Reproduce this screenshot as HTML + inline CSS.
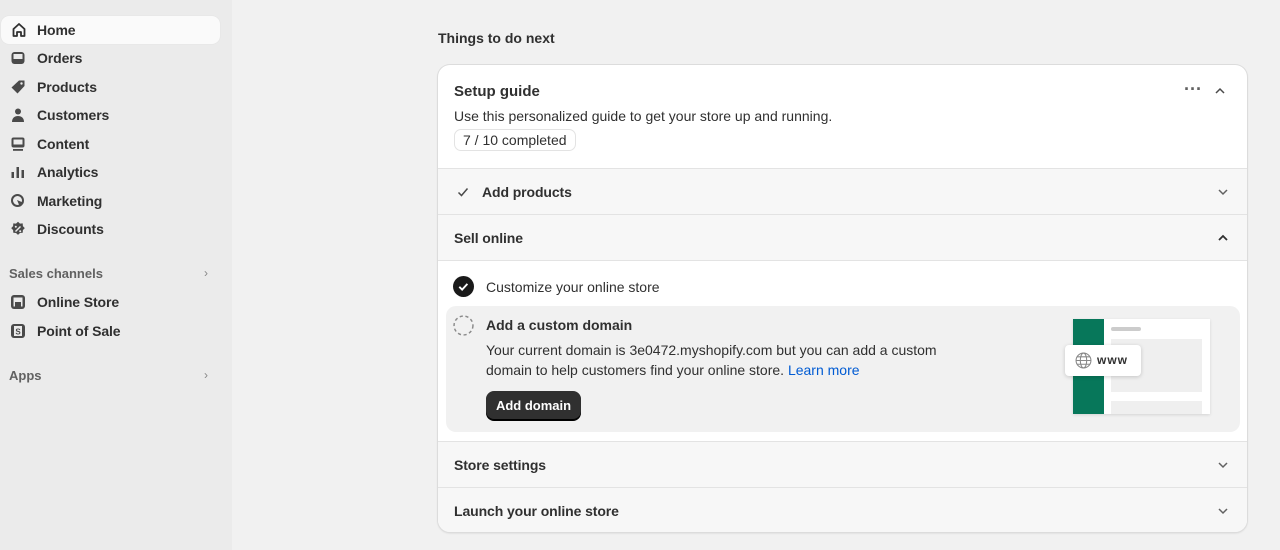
<!DOCTYPE html>
<html><head><style>
*{box-sizing:border-box;margin:0;padding:0}
body{width:1280px;height:550px;overflow:hidden;background:#f1f1f1;font-family:"Liberation Sans",sans-serif;color:#303030;position:relative;font-size:14px}
.side{position:absolute;left:0;top:0;width:232px;height:550px;background:#ebebeb}
.nav{position:absolute;left:0;width:220px;height:28px;display:flex;align-items:center;font-size:14px;font-weight:600;color:#303030}
.nav .ic{position:absolute;left:10px;top:6px;width:16px;height:16px}
.nav span{position:absolute;left:37px;letter-spacing:-0.1px}
.sec{position:absolute;left:9px;font-size:13px;font-weight:600;color:#616161}
.chev{position:absolute;left:204px;font-size:12px;color:#888}
.abs{position:absolute}
.card{position:absolute;left:438px;top:65px;width:809px;height:467px;background:#fff;border-radius:12px;box-shadow:0 0 0 1px #dcdcdc,0 1px 2px rgba(0,0,0,.15);overflow:hidden}
.row{position:absolute;left:0;width:809px;height:46px;background:#f7f7f7;border-top:1px solid #e3e3e3;font-weight:600;font-size:14px;letter-spacing:-0.1px}
.row b{position:absolute;left:16px;top:15px;font-weight:600}
.dn{position:absolute;right:18px;top:17px;width:12px;height:12px}
</style></head><body>
<div class="side">
 <div class="nav" style="top:16px;background:#fafafa;border-radius:8px;left:1px;width:219px;box-shadow:0 0 1px rgba(0,0,0,.1)"><svg class="ic" viewBox="0 0 16 16"><path d="M2.5 14V7L8 2l5.5 5v7H10V10H6v4z" fill="none" stroke="#303030" stroke-width="1.8" stroke-linejoin="round"/></svg><span style="left:36px">Home</span></div>
 <div class="nav" style="top:44px"><svg class="ic" viewBox="0 0 16 16"><rect x="1.5" y="2" width="13" height="12" rx="3" fill="#4a4a4a"/><rect x="3.5" y="4" width="9" height="5" fill="#ebebeb"/></svg><span>Orders</span></div>
 <div class="nav" style="top:73px"><svg class="ic" viewBox="0 0 16 16"><path d="M9 1.5h5.5V7l-7 7.5L1.5 8.5z" fill="#4a4a4a"/><circle cx="11.5" cy="4.5" r="1.2" fill="#ebebeb"/></svg><span>Products</span></div>
 <div class="nav" style="top:101px"><svg class="ic" viewBox="0 0 16 16"><circle cx="8" cy="4.5" r="3" fill="#4a4a4a"/><path d="M2 15c0-4 2.5-6 6-6s6 2 6 6z" fill="#4a4a4a"/></svg><span>Customers</span></div>
 <div class="nav" style="top:130px"><svg class="ic" viewBox="0 0 16 16"><rect x="1.5" y="1.5" width="13" height="10" rx="2" fill="#4a4a4a"/><rect x="3.5" y="3.5" width="9" height="5" fill="#ebebeb"/><rect x="3" y="13" width="10" height="1.8" fill="#4a4a4a"/></svg><span>Content</span></div>
 <div class="nav" style="top:158px"><svg class="ic" viewBox="0 0 16 16"><rect x="1.5" y="8" width="2.5" height="6" fill="#4a4a4a"/><rect x="6.5" y="3" width="2.5" height="11" fill="#4a4a4a"/><rect x="11.5" y="6" width="2.5" height="8" fill="#4a4a4a"/></svg><span>Analytics</span></div>
 <div class="nav" style="top:187px"><svg class="ic" viewBox="0 0 16 16"><circle cx="7.5" cy="7.5" r="5.5" fill="none" stroke="#4a4a4a" stroke-width="2"/><path d="M7 7l7 3-3 1-1 3z" fill="#4a4a4a"/></svg><span>Marketing</span></div>
 <div class="nav" style="top:215px"><svg class="ic" viewBox="0 0 16 16"><path d="M8 .8l2 1.8 2.7-.2.2 2.7 1.9 2-1.9 2-.2 2.7-2.7.2-2 1.9-2-1.9-2.7-.2-.2-2.7L1.2 7.1l1.9-2 .2-2.7 2.7.2z" fill="#4a4a4a"/><path d="M5.5 10.5l5-5" stroke="#ebebeb" stroke-width="1.4"/><circle cx="5.8" cy="5.8" r="1" fill="#ebebeb"/><circle cx="10.2" cy="10.2" r="1" fill="#ebebeb"/></svg><span>Discounts</span></div>
 <div class="sec" style="top:266px">Sales channels</div><div class="chev" style="top:266px">›</div>
 <div class="nav" style="top:288px"><svg class="ic" viewBox="0 0 16 16"><rect x="1" y="1" width="14" height="14" rx="3" fill="#4a4a4a"/><rect x="3.5" y="3.5" width="9" height="9" fill="#ebebeb"/><rect x="5" y="8" width="6" height="4.5" fill="#4a4a4a"/></svg><span>Online Store</span></div>
 <div class="nav" style="top:317px"><svg class="ic" viewBox="0 0 16 16"><rect x="1" y="1" width="14" height="14" rx="3" fill="#4a4a4a"/><rect x="4" y="3" width="8" height="10" fill="#ebebeb"/><text x="8" y="11.5" font-size="8" text-anchor="middle" fill="#4a4a4a" font-family="Liberation Sans" font-weight="bold">S</text></svg><span>Point of Sale</span></div>
 <div class="sec" style="top:368px">Apps</div><div class="chev" style="top:368px">›</div>
</div>

<div class="abs" style="left:438px;top:30px;font-weight:600;font-size:14px">Things to do next</div>
<div class="card">
 <div class="abs" style="left:16px;top:18px;font-weight:600;font-size:15px">Setup guide</div>
 <div class="abs" style="left:16px;top:43px;font-size:14px">Use this personalized guide to get your store up and running.</div>
 <div class="abs" style="left:16px;top:64px;height:22px;padding:0 8px;border:1px solid #e3e3e3;border-radius:7px;line-height:20px;font-size:14px">7 / 10 completed</div>
 <div class="abs" style="left:746px;top:14px;font-size:18px;color:#616161;letter-spacing:0px;font-weight:bold">···</div>
 <svg class="abs" style="left:776px;top:20px" width="12" height="12" viewBox="0 0 12 12"><path d="M2 8l4-4 4 4" fill="none" stroke="#4a4a4a" stroke-width="1.5"/></svg>
 <div class="row" style="top:103px"><svg class="abs" style="left:19px;top:17px" width="12" height="12" viewBox="0 0 12 12"><path d="M1.5 6.5l3 3 6-7" fill="none" stroke="#4a4a4a" stroke-width="1.5"/></svg><b style="left:44px">Add products</b><svg class="dn" viewBox="0 0 12 12"><path d="M2 4l4 4 4-4" fill="none" stroke="#616161" stroke-width="1.5"/></svg></div>
 <div class="row" style="top:149px"><b>Sell online</b><svg class="dn" viewBox="0 0 12 12"><path d="M2 8l4-4 4 4" fill="none" stroke="#303030" stroke-width="1.8"/></svg></div>
 <div class="abs" style="left:0;top:195px;width:809px;height:1px;background:#e3e3e3"></div>
 <svg class="abs" style="left:15px;top:211px" width="21" height="21" viewBox="0 0 20 20"><circle cx="10" cy="10" r="10" fill="#1a1a1a"/><path d="M6 10.3l2.7 2.7 5-5.5" fill="none" stroke="#fff" stroke-width="1.8"/></svg>
 <div class="abs" style="left:48px;top:214px;font-size:14px">Customize your online store</div>
 <div class="abs" style="left:8px;top:241px;width:794px;height:126px;background:#f1f1f1;border-radius:10px">
  <svg class="abs" style="left:7px;top:9px" width="21" height="21" viewBox="0 0 20 20"><circle cx="10" cy="10" r="9" fill="none" stroke="#8a8a8a" stroke-width="1.4" stroke-dasharray="3 2.5"/></svg>
  <div class="abs" style="left:40px;top:11px;font-weight:600;font-size:14px">Add a custom domain</div>
  <div class="abs" style="left:40px;top:34px;width:480px;font-size:14px;line-height:20px">Your current domain is 3e0472.myshopify.com but you can add a custom domain to help customers find your online store. <span style="color:#005bd3">Learn more</span></div>
  <div class="abs" style="left:40px;top:85px;width:95px;height:29px;background:#303030;color:#fff;border-radius:8px;font-weight:600;font-size:13px;text-align:center;line-height:29px;box-shadow:inset 0 -1px 0 #000,0 1px 0 #000">Add domain</div>
  <div class="abs" style="left:627px;top:13px;width:137px;height:95px;background:#fff;box-shadow:0 1px 3px rgba(0,0,0,.12)"></div>
  <div class="abs" style="left:627px;top:13px;width:31px;height:95px;background:#07775a"></div>
  <div class="abs" style="left:665px;top:21px;width:30px;height:4px;border-radius:2px;background:#ccc"></div>
  <div class="abs" style="left:665px;top:33px;width:91px;height:53px;background:#efefef"></div>
  <div class="abs" style="left:665px;top:95px;width:91px;height:13px;background:#efefef"></div>
  <div class="abs" style="left:619px;top:39px;width:76px;height:31px;background:#fff;border-radius:4px;box-shadow:0 1px 4px rgba(0,0,0,.18)"></div>
  <svg class="abs" style="left:629px;top:46px" width="17" height="17" viewBox="0 0 16 16"><g fill="none" stroke="#888" stroke-width="1"><circle cx="8" cy="8" r="7"/><ellipse cx="8" cy="8" rx="3" ry="7"/><path d="M1 8h14M2 4.5h12M2 11.5h12"/></g></svg>
  <div class="abs" style="left:651px;top:47px;font-weight:700;font-size:12px;letter-spacing:1px;color:#303030">www</div>
 </div>
 <div class="row" style="top:376px"><b>Store settings</b><svg class="dn" viewBox="0 0 12 12"><path d="M2 4l4 4 4-4" fill="none" stroke="#616161" stroke-width="1.5"/></svg></div>
 <div class="row" style="top:422px"><b>Launch your online store</b><svg class="dn" viewBox="0 0 12 12"><path d="M2 4l4 4 4-4" fill="none" stroke="#616161" stroke-width="1.5"/></svg></div>
</div>
</body></html>
